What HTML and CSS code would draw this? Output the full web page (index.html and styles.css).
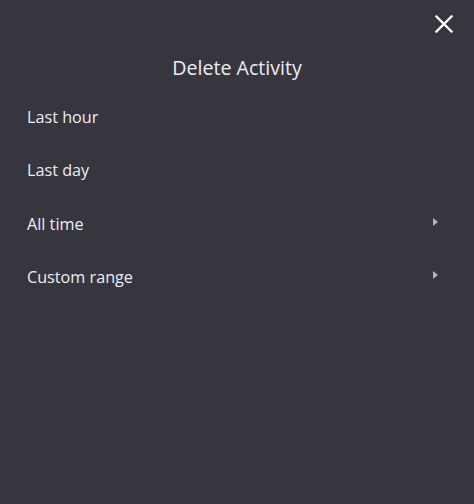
FILE: index.html
```html
<!DOCTYPE html>
<html>
<head>
<meta charset="utf-8">
<link rel="stylesheet" href="styles.css">
</head>
<body>
<div class="dialog">
  <div class="topbar">
    <button class="close" aria-label="Close">
      <svg width="18" height="18" viewBox="0 0 18 18"><path d="M1.5 1.5L16.5 16.5M16.5 1.5L1.5 16.5" stroke="#ffffff" stroke-width="2.3" stroke-linecap="square" fill="none"/></svg>
    </button>
  </div>
  <div class="title">Delete Activity</div>
  <ul class="menu">
    <li class="item"><span class="label">Last hour</span></li>
    <li class="item"><span class="label">Last day</span></li>
    <li class="item"><span class="label">All time</span><span class="arrow"></span></li>
    <li class="item"><span class="label">Custom range</span><span class="arrow"></span></li>
  </ul>
</div>
</body>
</html>
```
FILE: styles.css
```css
html, body {
  margin: 0;
  padding: 0;
  background: #37363f;
}
.dialog {
  width: 474px;
  height: 504px;
  background: #37363f;
  font-family: "Open Sans", "Liberation Sans", sans-serif;
  color: #ededf1;
  box-sizing: border-box;
}
.topbar {
  height: 48px;
  display: flex;
  justify-content: flex-end;
  align-items: center;
  padding-right: 21px;
}
.close {
  background: none;
  border: 0;
  padding: 0;
  width: 18px;
  height: 18px;
  display: block;
}
.close svg { display: block; }
.title {
  margin-top: 7px;
  text-align: center;
  font-size: 19.6px;
  line-height: 26px;
  color: #ececf0;
}
.menu {
  list-style: none;
  margin: 9px 0 0 0;
  padding: 0;
}
.item {
  height: 53.5px;
  display: flex;
  align-items: center;
  justify-content: space-between;
  padding: 0 36px 0 27px;
  font-size: 16.2px;
  font-weight: 500;
}
.arrow {
  width: 0;
  height: 0;
  border-top: 4.5px solid transparent;
  border-bottom: 4.5px solid transparent;
  border-left: 5px solid #b4b4bd;
  margin-bottom: 4px;
}
```
